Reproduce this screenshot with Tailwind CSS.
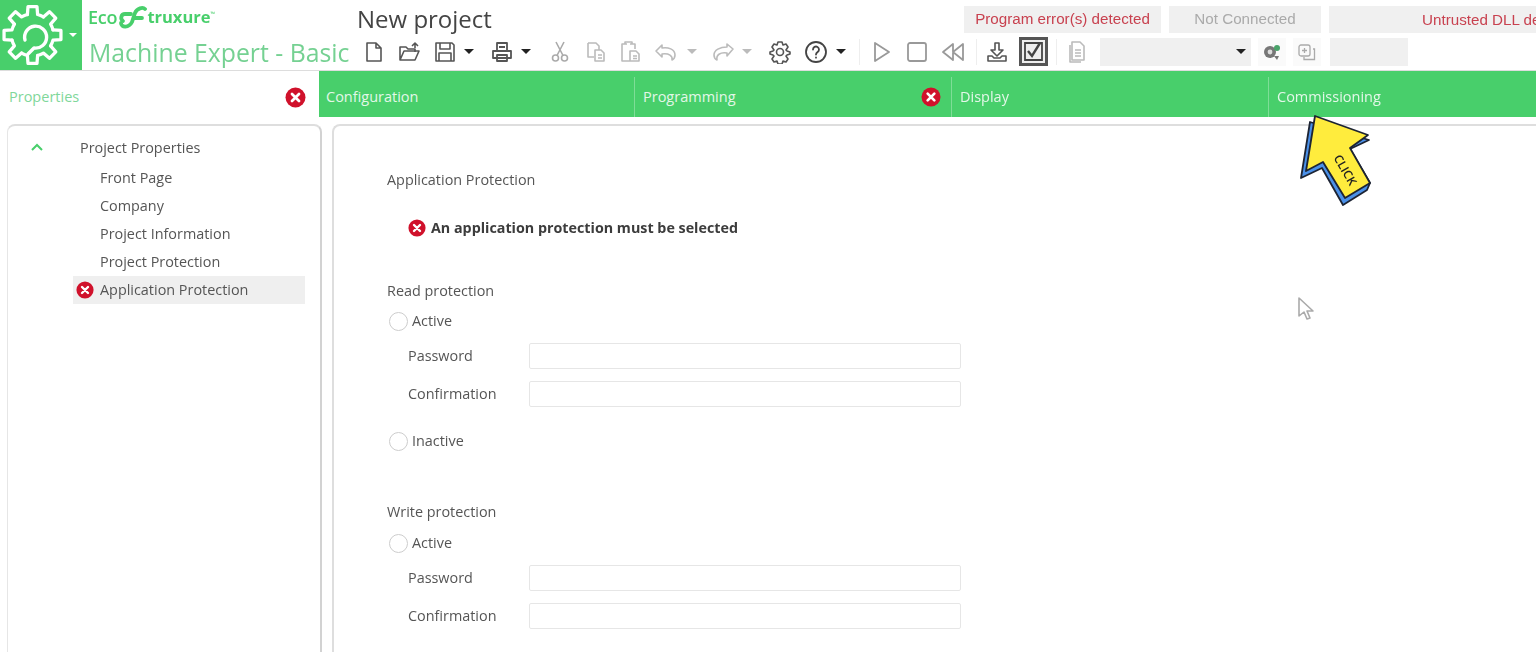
<!DOCTYPE html>
<html lang="en">
<head>
    <meta charset="UTF-8">
    <meta name="viewport" content="width=device-width, initial-scale=1.0">
    <title>Machine Expert - Basic</title>
    <script src="https://cdn.jsdelivr.net/npm/@tailwindcss/browser@4"></script>
</head>
<body class="relative h-[652px] w-[1536px] overflow-hidden bg-white font-['Open_Sans',sans-serif] text-[#555] blur-[0.6px]">

    <!-- header -->
    <header class="flex h-[70px]">
        <div class="relative h-[70px] w-[82px] shrink-0 bg-[#48cf6b]">
            <svg class="h-[70px] w-[70px]" viewBox="0 0 70 70" fill="none" stroke="#fff" stroke-width="3.4" stroke-linejoin="round" stroke-linecap="round">
                <defs><path id="tooth" d="M21.350 -5.320 29.630 -4.690V4.690L21.350 5.320A22 22 0 0 1 18.860 11.330"/></defs>
                <g transform="translate(32.500 35) scale(.96)">
                    <use href="#tooth"/>
                    <use href="#tooth" transform="rotate(45)"/>
                    <use href="#tooth" transform="rotate(90)"/>
                    <use href="#tooth" transform="rotate(135)"/>
                    <use href="#tooth" transform="rotate(180)"/>
                    <use href="#tooth" transform="rotate(225)"/>
                    <use href="#tooth" transform="rotate(270)"/>
                    <use href="#tooth" transform="rotate(315)"/>
                </g>
                <path d="M25 40a11 11 0 1 1 9 8l-6 6"/>
            </svg>
            <span class="absolute left-[69px] top-[33px] h-0 w-0 border-x-[4px] border-t-[4px] border-x-transparent border-t-white"></span>
        </div>
        <div class="w-[275px] shrink-0 pl-[7px]">
            <div class="-ml-[1px] flex h-[37px] items-center pb-[3px] text-[#48cf6b]">
                <span class="text-[18px] font-semibold leading-none tracking-[-0.2px]">Eco</span>
                <svg class="h-[24px] w-[30px]" viewBox="0 0 30 24" fill="none" stroke="#48cf6b" stroke-width="3.800" stroke-linecap="round"><path d="M4 18c0 5 8 5 11-1l3-9c2-5 8-6 10-4"/><path d="M14 9H8c-4 0-5 5-2 7M17 13h8"/></svg>
                <span class="text-[16.500px] font-bold leading-none">truxure</span>
                <span class="mb-[6px] text-[6px] leading-none">™</span>
            </div>
            <div class="text-[24.800px] leading-[30px] whitespace-nowrap text-[#75d192]">Machine Expert - Basic</div>
        </div>
        <div class="min-w-0 flex-1">
            <div class="flex h-[37px]">
                <div class="w-[607px] text-[24px] leading-[38px] text-[#444]">New project</div>
                <div class="mt-[6px] flex h-[27px] w-[197px] items-center justify-center bg-[#f0f0f0] font-['Liberation_Sans',sans-serif] text-[15.200px] text-[#c8414f]">Program error(s) detected</div>
                <div class="mt-[6px] ml-[8px] flex h-[27px] w-[152px] items-center justify-center bg-[#f0f0f0] font-['Liberation_Sans',sans-serif] text-[15.200px] text-[#aaa]">Not Connected</div>
                <div class="mt-[6px] ml-[8px] h-[27px] flex-1 overflow-hidden whitespace-nowrap bg-[#f0f0f0] pl-[93px] font-['Liberation_Sans',sans-serif] text-[15.200px] leading-[27px] text-[#c8414f]">Untrusted DLL detected</div>
            </div>
            <!-- toolbar -->
            <div class="flex h-[29px] items-center">
                <svg class="ml-[5px] h-6 w-6" viewBox="0 0 24 24" fill="none" stroke="#555" stroke-width="1.6" stroke-linejoin="round"><path d="M5 3h9l5 5v13H5zM14 3v5h5"/></svg>
                <svg class="ml-[11px] h-6 w-6" viewBox="0 0 24 24" fill="none" stroke="#555" stroke-width="1.6" stroke-linejoin="round"><path d="M3 20V7h6l2 2h7v3M3 20l4-9h15l-4 9zM15 6l3-3 3 3M18 3v5"/></svg>
                <svg class="ml-[12px] h-6 w-6" viewBox="0 0 24 24" fill="none" stroke="#555" stroke-width="1.6" stroke-linejoin="round"><path d="M3 3h16l2 2v16H3zM7 3v6h10V3M6 21v-8h12v8"/></svg>
                <span class="ml-[7px] h-0 w-0 border-x-[5px] border-t-[5px] border-x-transparent border-t-[#222]"></span>
                <svg class="ml-[16px] h-6 w-6" viewBox="0 0 24 24" fill="none" stroke="#555" stroke-width="1.8" stroke-linejoin="round"><path d="M7 10V3h10v7M3 11h18v7H3zM7 15h10v6H7zM9 7h6"/></svg>
                <span class="ml-[7px] h-0 w-0 border-x-[5px] border-t-[5px] border-x-transparent border-t-[#222]"></span>
                <svg class="ml-[17px] h-6 w-6" viewBox="0 0 24 24" fill="none" stroke="#aaa" stroke-width="1.6"><circle cx="7.5" cy="18" r="3"/><circle cx="16.5" cy="18" r="3"/><path d="M9 15.5 16 2M15 15.5 8 2"/></svg>
                <svg class="ml-[12px] h-6 w-6" viewBox="0 0 24 24" fill="none" stroke="#bbb" stroke-width="1.6" stroke-linejoin="round"><path d="M4 3h8l3 3v4M4 3v14h6M11 10h6l3 3v8h-9zM14 15h4M14 18h4"/></svg>
                <svg class="ml-[11px] h-6 w-6" viewBox="0 0 24 24" fill="none" stroke="#bbb" stroke-width="1.6" stroke-linejoin="round"><path d="M8 4H3v17h8M16 9V4h-5M6 4V2h7v2M11 11h6l3 3v7h-9zM14 16h4M14 18.500h4"/></svg>
                <svg class="ml-[11px] h-6 w-6" viewBox="0 0 24 24" fill="none" stroke="#bbb" stroke-width="1.6" stroke-linejoin="round"><path d="M2 11l6-6v3c6-1 13 1 13 7 0 2-1 4-3 5 1-4-3-7-10-6v3z"/></svg>
                <span class="ml-[9px] h-0 w-0 border-x-[5px] border-t-[5px] border-x-transparent border-t-[#bbb]"></span>
                <svg class="ml-[14px] h-6 w-6" viewBox="0 0 24 24" fill="none" stroke="#bbb" stroke-width="1.6" stroke-linejoin="round"><path d="M22 9l-6-5v3C9 7 3 10 3 15c0 2 1 4 3 5-1-5 3-8 10-7v3z"/></svg>
                <span class="ml-[7px] h-0 w-0 border-x-[5px] border-t-[5px] border-x-transparent border-t-[#bbb]"></span>
                <svg class="ml-[16px] h-6 w-6" viewBox="0 0 24 24" fill="none" stroke="#555" stroke-width="1.6" stroke-linejoin="round"><circle cx="12" cy="12" r="3.500"/><path d="M10 2h4l1 3 3-1 2 3-2 3 1 1 3 1v2l-3 1-1 1 2 3-2 3-3-1-1 3h-4l-1-3-3 1-2-3 2-3-1-1-3-1v-2l3-1 1-1-2-3 2-3 3 1z"/></svg>
                <svg class="ml-[12px] h-6 w-6" viewBox="0 0 24 24" fill="none" stroke="#444" stroke-width="1.8" stroke-linecap="round"><circle cx="12" cy="12" r="10"/><path d="M9 9.500a3 3 0 1 1 4.500 2.600c-1 .6-1.500 1.200-1.500 2.400M12 17.500v.2"/></svg>
                <span class="ml-[8px] h-0 w-0 border-x-[5px] border-t-[5px] border-x-transparent border-t-[#222]"></span>
                <span class="ml-[13px] h-[26px] w-px bg-[#eee]"></span>
                <svg class="ml-[9px] h-6 w-6" viewBox="0 0 24 24" fill="none" stroke="#999" stroke-width="1.8" stroke-linejoin="round"><path d="M6 3l14 9-14 9z"/></svg>
                <svg class="ml-[12px] h-6 w-6" viewBox="0 0 24 24" fill="none" stroke="#999" stroke-width="1.8"><rect x="3" y="3" width="18" height="18" rx="2"/></svg>
                <svg class="ml-[12px] h-6 w-6" viewBox="0 0 24 24" fill="none" stroke="#999" stroke-width="1.8" stroke-linejoin="round"><path d="M12 4v16L2 12zM22 4v16l-10-8z"/></svg>
                <span class="ml-[11px] h-[26px] w-px bg-[#eee]"></span>
                <svg class="ml-[8px] h-6 w-6" viewBox="0 0 24 24" fill="none" stroke="#555" stroke-width="1.6" stroke-linejoin="round"><path d="M10 3h4v7h4l-6 6-6-6h4zM3 16v5h18v-5h-4l-2 2H9l-2-2z"/></svg>
                <div class="ml-[10px] flex h-[29px] w-[29px] items-center justify-center border-[3px] border-[#555] bg-[#eee]">
                    <svg class="h-[21px] w-[21px]" viewBox="0 0 21 21" fill="none" stroke="#444" stroke-width="1.800"><path d="M2 2h17v17H2z"/><path d="M5 10l4 5 8-13" stroke-width="2.400"/></svg>
                </div>
                <span class="ml-[8px] h-[26px] w-px bg-[#eee]"></span>
                <svg class="ml-[8px] h-6 w-6" viewBox="0 0 24 24" fill="none" stroke="#bbb" stroke-width="1.600" stroke-linejoin="round"><path d="M7 2h8l4 4v14H7zM5 5v17h11M10 10h6M10 13h6M10 16h6"/></svg>
                <div class="ml-[11px] flex h-[28px] w-[151px] items-center justify-end bg-[#f0f0f0] pr-[5px]">
                    <span class="h-0 w-0 border-x-[5px] border-t-[5px] border-x-transparent border-t-[#222]"></span>
                </div>
                <div class="ml-[7px] flex h-[28px] w-[28px] items-center justify-center bg-[#fafafa]">
                    <svg class="h-[18px] w-[18px]" viewBox="0 0 18 18" fill="#777"><circle cx="7" cy="9" r="6"/><circle cx="7" cy="9" r="2.400" fill="#ddd"/><circle cx="14" cy="5" r="3" fill="#4aa36a"/><path d="M11 13h5l-2 4z"/></svg>
                </div>
                <div class="ml-[7px] flex h-[28px] w-[28px] items-center justify-center bg-[#fafafa]">
                    <svg class="h-[18px] w-[18px]" viewBox="0 0 18 18" fill="none" stroke="#aaa" stroke-width="1.300"><rect x="1" y="2" width="11" height="11" rx="2"/><path d="M15 6h1.500v10.500H6V14M4 7.500h5M6.500 5v5"/></svg>
                </div>
                <div class="ml-[9px] h-[28px] w-[78px] bg-[#f0f0f0]"></div>
            </div>
        </div>
    </header>

    <!-- tabs -->
    <nav class="flex h-[47px] border-t border-[#ddd] text-[14.500px] font-medium text-[#e3f7e8]">
        <div class="flex w-[319px] items-center justify-between bg-white pt-[6px] pl-[9px] pr-[13px] text-[#7fd79a]">
            <span>Properties</span>
            <svg class="h-[21px] w-[21px]" viewBox="0 0 21 21"><circle cx="10.500" cy="10.500" r="10" fill="#d0112b"/><path d="M7 7l7 7M14 7l-7 7" stroke="#fff" stroke-width="2.800" stroke-linecap="round"/></svg>
        </div>
        <div class="flex flex-1 bg-[#48cf6b] pt-[6px]">
            <div class="flex w-[316px] items-center pl-[7px]">Configuration</div>
            <div class="flex w-[317px] items-center justify-between pl-[8px] pr-[11px] shadow-[-1px_0_0_#7fdd97]">
                <span>Programming</span>
                <svg class="h-[20px] w-[20px]" viewBox="0 0 21 21"><circle cx="10.500" cy="10.500" r="10" fill="#d0112b"/><path d="M7 7l7 7M14 7l-7 7" stroke="#fff" stroke-width="2.800" stroke-linecap="round"/></svg>
            </div>
            <div class="flex w-[317px] items-center pl-[8px] shadow-[-1px_0_0_#7fdd97]">Display</div>
            <div class="flex flex-1 items-center pl-[8px] shadow-[-1px_0_0_#7fdd97]">Commissioning</div>
        </div>
    </nav>

    <!-- panels -->
    <main class="flex h-[535px] pt-[7px] text-[14.400px]">
        <aside class="ml-[7px] w-[315px] shrink-0 rounded-t-[8px] border-t-2 border-r-2 border-l border-t-[#dedede] border-r-[#d2d2d2] border-l-[#e6e6e6] pt-[8px]">
            <div class="flex h-[28px] items-center">
                <svg class="ml-[23px] h-[10px] w-[12px]" viewBox="0 0 12 10" fill="none" stroke="#48cf6b" stroke-width="2"><path d="M1 7l5-5 5 5"/></svg>
                <span class="ml-[37px]">Project Properties</span>
            </div>
            <ul class="mt-[2px] ml-[65px] w-[232px]">
                <li class="flex h-[28px] items-center pl-[27px]">Front Page</li>
                <li class="flex h-[28px] items-center pl-[27px]">Company</li>
                <li class="flex h-[28px] items-center pl-[27px]">Project Information</li>
                <li class="flex h-[28px] items-center pl-[27px]">Project Protection</li>
                <li class="flex h-[28px] items-center bg-[#efefef] pl-[3px]">
                    <svg class="mr-[6px] h-[18px] w-[18px]" viewBox="0 0 21 21"><circle cx="10.500" cy="10.500" r="10" fill="#d0112b"/><path d="M7 7l7 7M14 7l-7 7" stroke="#fff" stroke-width="2.800" stroke-linecap="round"/></svg>
                    <span>Application Protection</span>
                </li>
            </ul>
        </aside>
        <section class="ml-[10px] flex-1 rounded-tl-[8px] border-t-2 border-l-2 border-[#dedede] pl-[53px]">
            <h2 class="mt-[44px] leading-[20px]">Application Protection</h2>
            <div class="mt-[28px] ml-[21px] flex h-[20px] items-center">
                <svg class="mr-[5px] h-[18px] w-[18px]" viewBox="0 0 21 21"><circle cx="10.500" cy="10.500" r="10" fill="#d0112b"/><path d="M7 7l7 7M14 7l-7 7" stroke="#fff" stroke-width="2.800" stroke-linecap="round"/></svg>
                <span class="text-[14.300px] font-bold text-[#3c3c3c]">An application protection must be selected</span>
            </div>

            <div class="mt-[43px] leading-[20px]">Read protection</div>
            <div class="mt-[10px] flex h-[20px] items-center">
                <span class="ml-[2px] h-[19px] w-[19px] rounded-full border border-[#ccc]"></span>
                <span class="ml-[4px]">Active</span>
            </div>
            <div class="mt-[12px] flex h-[26px] items-center">
                <span class="ml-[21px] w-[121px]">Password</span>
                <input type="text" class="h-[26px] w-[432px] rounded-[2px] border border-[#e6e6e6]">
            </div>
            <div class="mt-[12px] flex h-[26px] items-center">
                <span class="ml-[21px] w-[121px]">Confirmation</span>
                <input type="text" class="h-[26px] w-[432px] rounded-[2px] border border-[#e6e6e6]">
            </div>
            <div class="mt-[24px] flex h-[20px] items-center">
                <span class="ml-[2px] h-[19px] w-[19px] rounded-full border border-[#ccc]"></span>
                <span class="ml-[4px]">Inactive</span>
            </div>

            <div class="mt-[51px] leading-[20px]">Write protection</div>
            <div class="mt-[11px] flex h-[20px] items-center">
                <span class="ml-[2px] h-[19px] w-[19px] rounded-full border border-[#ccc]"></span>
                <span class="ml-[4px]">Active</span>
            </div>
            <div class="mt-[12px] flex h-[26px] items-center">
                <span class="ml-[21px] w-[121px]">Password</span>
                <input type="text" class="h-[26px] w-[432px] rounded-[2px] border border-[#e6e6e6]">
            </div>
            <div class="mt-[12px] flex h-[26px] items-center">
                <span class="ml-[21px] w-[121px]">Confirmation</span>
                <input type="text" class="h-[26px] w-[432px] rounded-[2px] border border-[#e6e6e6]">
            </div>
        </section>
    </main>

    <!-- click arrow overlay -->
    <div class="absolute left-[1298px] top-[113px] h-[96px] w-[74px]">
        <svg class="h-full w-full" viewBox="0 0 74 96" stroke="#1d2433" stroke-width="1.800" stroke-linejoin="round">
            <path d="M12 9 3 65l21-10 21 37 24-15 3-7-20-34 19-9z" fill="#4a90e8"/>
            <path d="M17 3l53 19-18 13 20 35-25 15-22-36-17 9z" fill="#ffec3d"/>
        </svg>
        <span class="absolute left-[47px] top-[57px] -translate-x-1/2 -translate-y-1/2 rotate-[60deg] text-[12px] font-semibold leading-none text-[#222]">CLICK</span>
    </div>

    <!-- mouse cursor overlay -->
    <svg class="absolute left-[1297px] top-[296px] h-[26px] w-[18px]" viewBox="0 0 18 26" fill="#fff" stroke="#aaa" stroke-width="1.600" stroke-linejoin="round"><path d="M2 2v18l5-4 3 7 3-1-3-7h6z"/></svg>

</body>
</html>
